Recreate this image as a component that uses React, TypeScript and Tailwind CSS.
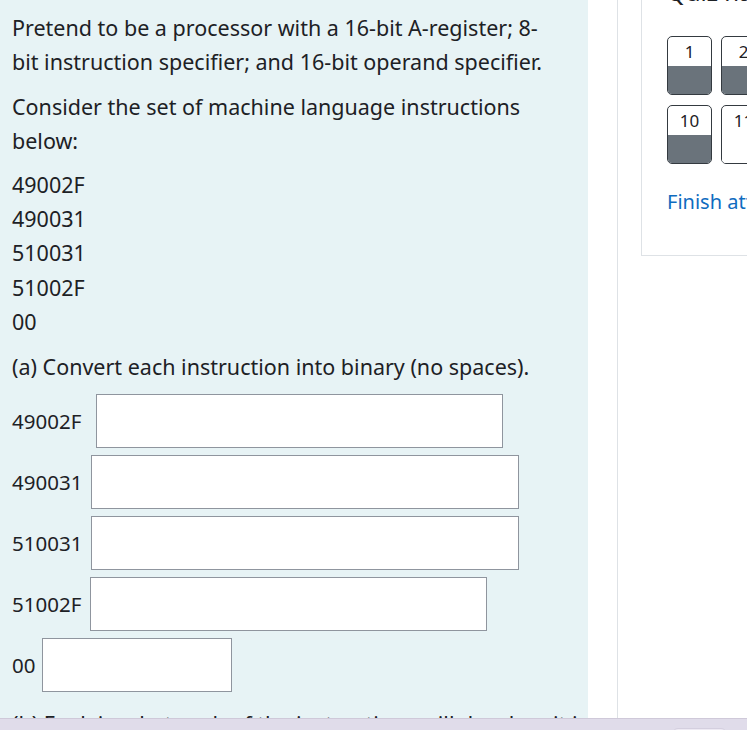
import React from "react";

const font = { fontFamily: '"Noto Sans", "Open Sans", Arial, sans-serif' };

function Field({ label, w, gap }: { label: string; w: string; gap: string }) {
  return (
    <div className={`flex items-center ${gap}`}>
      <span className="whitespace-nowrap">{label}</span>
      <div className={`h-[54px] ${w} bg-white border border-[#8f959e]`} />
    </div>
  );
}

function NavBtn({ n, done }: { n: string; done: boolean }) {
  return (
    <div className="w-[45px] h-[59px] rounded-[5px] border border-[#343a40] overflow-hidden flex flex-col bg-white shrink-0">
      <div className="h-[29px] flex items-center justify-center text-[17px] text-[#1d2125]">{n}</div>
      <div className={`flex-1 ${done ? "bg-[#6a737b]" : "bg-white"}`} />
    </div>
  );
}

export default function App() {
  return (
    <div className="w-[747px] h-[730px] flex flex-col overflow-hidden bg-white" style={font}>
      <div className="h-[718px] flex overflow-hidden">
        <div className="w-[588px] shrink-0 bg-[#e7f3f5] text-[#1d2125] text-[21.5px] leading-[34.4px] pl-[12px] pt-[11px]">
          <div className="w-[535px]">
            <p>Pretend to be a processor with a 16-bit A-register; 8-bit instruction specifier; and 16-bit operand specifier.</p>
            <p className="mt-[10px]">Consider the set of machine language instructions below:</p>
          </div>
          <div className="mt-[9px]">
            <div>49002F</div>
            <div>490031</div>
            <div>510031</div>
            <div>51002F</div>
            <div>00</div>
          </div>
          <p className="mt-[10px]">(a) Convert each instruction into binary (no spaces).</p>
          <div className="mt-[10px] flex flex-col gap-[7px] text-[20.5px]">
            <Field label="49002F" w="w-[407px]" gap="gap-[15px]" />
            <Field label="490031" w="w-[428px]" gap="gap-[9px]" />
            <Field label="510031" w="w-[428px]" gap="gap-[9px]" />
            <Field label="51002F" w="w-[397px]" gap="gap-[9px]" />
            <Field label="00" w="w-[190px]" gap="gap-[7px]" />
          </div>
          <p className="mt-[15px] whitespace-nowrap">(b) Explain what each of the instructions will do when it is executed.</p>
        </div>
        <div className="w-[30px] shrink-0 bg-white border-r border-[#dee2e6]" />
        <div className="flex-1 pl-[23px] bg-white">
          <div className="border-l border-b border-[#dee2e6] h-[256px] pl-[25px] overflow-hidden">
            <div className="-mt-[22px] text-[24px] leading-[28px] text-[#1d2125] whitespace-nowrap">Quiz navigation</div>
            <div className="mt-[30px] flex flex-col gap-[10px]">
              <div className="flex gap-[9px]">
                <NavBtn n="1" done />
                <NavBtn n="2" done />
              </div>
              <div className="flex gap-[9px]">
                <NavBtn n="10" done />
                <NavBtn n="11" done={false} />
              </div>
            </div>
            <div className="mt-[23px] text-[20px] text-[#0f6cbf] whitespace-nowrap">Finish attempt ...</div>
          </div>
        </div>
      </div>
      <div className="h-[12px] bg-[#e0dcea] border-t border-[#cfc9d9] relative">
        <div className="absolute left-[672px] top-[9px] w-[55px] h-[10px] rounded-t-[6px] bg-[#eeeaf4] border border-[#d4cfdf]" />
      </div>
    </div>
  );
}
